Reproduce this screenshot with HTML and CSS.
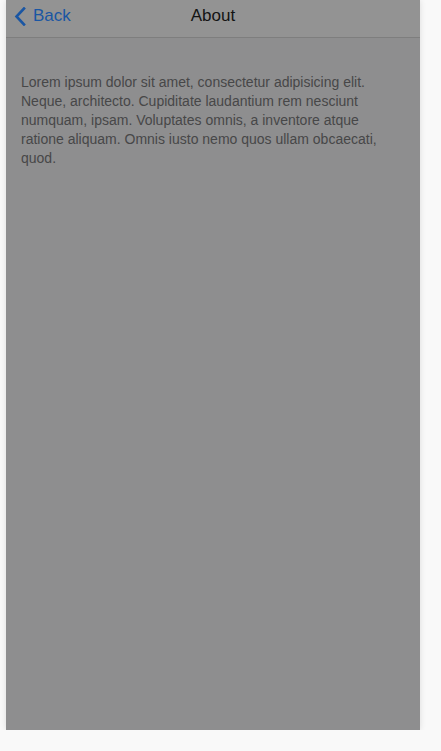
FILE: index.html
```html
<!DOCTYPE html>
<html lang="en">
<head>
<meta charset="utf-8">
<title>About</title>
<link rel="stylesheet" href="styles.css">
</head>
<body>
<div class="screen">
  <header class="navbar">
    <a class="back" href="#">
      <svg class="chevron" width="12" height="19" viewBox="0 0 12 19" aria-hidden="true">
        <path d="M10 1.5 L2.5 9.5 L10 17.5" fill="none" stroke="currentColor" stroke-width="2.6" stroke-linecap="square" stroke-linejoin="miter"/>
      </svg>
      <span>Back</span>
    </a>
    <h1 class="title">About</h1>
  </header>
  <main class="content">
    <p class="text">Lorem ipsum dolor sit amet, consectetur adipisicing elit. Neque, architecto. Cupiditate laudantium rem nesciunt numquam, ipsam. Voluptates omnis, a inventore atque ratione aliquam. Omnis iusto nemo quos ullam obcaecati, quod.</p>
  </main>
</div>
</body>
</html>
```

FILE: styles.css
```css
html, body {
  margin: 0;
  padding: 0;
  background: #f9f9f9;
  font-family: "Liberation Sans", Arial, sans-serif;
}

.screen {
  width: 414px;
  height: 730px;
  margin-left: 6px;
  background: #8e8e8f;
  box-shadow: 0 0 6px rgba(0, 0, 0, 0.12);
  display: flex;
  flex-direction: column;
}

.navbar {
  height: 37px;
  border-bottom: 1px solid #7e7e7e;
  background: #939393;
  position: relative;
  display: flex;
  align-items: center;
  justify-content: center;
}

.back {
  position: absolute;
  left: 8px;
  top: 0;
  height: 32px;
  display: flex;
  align-items: center;
  gap: 7px;
  color: #1a56a3;
  text-decoration: none;
  font-size: 17px;
}

.chevron {
  display: block;
}

.title {
  margin: 0;
  margin-top: -5px;
  font-size: 17px;
  font-weight: normal;
  color: #141414;
}

.content {
  padding: 35px 15px 0 15px;
}

.text {
  margin: 0;
  font-size: 14px;
  line-height: 19px;
  color: #474748;
}
```
